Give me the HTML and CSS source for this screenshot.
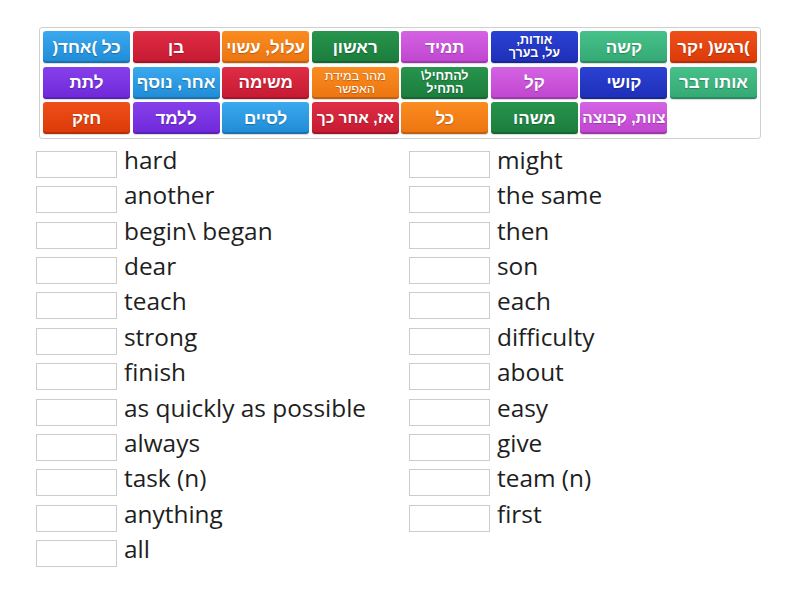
FILE: index.html
```html
<!DOCTYPE html>
<html lang="en">
<head>
<meta charset="utf-8">
<title>Match up</title>
<link rel="stylesheet" href="styles.css">
</head>
<body>
<div class="bank">
  <div class="tile c0" dir="rtl">כל )אחד(</div>
  <div class="tile c1" dir="rtl">בן</div>
  <div class="tile c2" dir="rtl">עלול, עשוי</div>
  <div class="tile c3" dir="rtl">ראשון</div>
  <div class="tile c4" dir="rtl">תמיד</div>
  <div class="tile c5 two" dir="rtl">אודות,<br>על, בערך</div>
  <div class="tile c6" dir="rtl">קשה</div>
  <div class="tile c7" dir="rtl">)רגש( יקר</div>

  <div class="tile c8" dir="rtl">לתת</div>
  <div class="tile c0" dir="rtl">אחר, נוסף</div>
  <div class="tile c1" dir="rtl">משימה</div>
  <div class="tile c2 two" dir="rtl">מהר במידת<br>האפשר</div>
  <div class="tile c3 two" dir="rtl">להתחיל\<br>התחיל</div>
  <div class="tile c4" dir="rtl">קל</div>
  <div class="tile c5" dir="rtl">קושי</div>
  <div class="tile c6" dir="rtl">אותו דבר</div>

  <div class="tile c7" dir="rtl">חזק</div>
  <div class="tile c8" dir="rtl">ללמד</div>
  <div class="tile c0" dir="rtl">לסיים</div>
  <div class="tile c1 long" dir="rtl">אז, אחר כך</div>
  <div class="tile c2" dir="rtl">כל</div>
  <div class="tile c3" dir="rtl">משהו</div>
  <div class="tile c4 long" dir="rtl">צוות, קבוצה</div>
</div>

<div class="answers">
  <div class="col">
    <div class="row"><span class="slot"></span><span class="word">hard</span></div>
    <div class="row"><span class="slot"></span><span class="word">another</span></div>
    <div class="row"><span class="slot"></span><span class="word">begin\ began</span></div>
    <div class="row"><span class="slot"></span><span class="word">dear</span></div>
    <div class="row"><span class="slot"></span><span class="word">teach</span></div>
    <div class="row"><span class="slot"></span><span class="word">strong</span></div>
    <div class="row"><span class="slot"></span><span class="word">finish</span></div>
    <div class="row"><span class="slot"></span><span class="word">as quickly as possible</span></div>
    <div class="row"><span class="slot"></span><span class="word">always</span></div>
    <div class="row"><span class="slot"></span><span class="word">task (n)</span></div>
    <div class="row"><span class="slot"></span><span class="word">anything</span></div>
    <div class="row"><span class="slot"></span><span class="word">all</span></div>
  </div>
  <div class="col">
    <div class="row"><span class="slot"></span><span class="word">might</span></div>
    <div class="row"><span class="slot"></span><span class="word">the same</span></div>
    <div class="row"><span class="slot"></span><span class="word">then</span></div>
    <div class="row"><span class="slot"></span><span class="word">son</span></div>
    <div class="row"><span class="slot"></span><span class="word">each</span></div>
    <div class="row"><span class="slot"></span><span class="word">difficulty</span></div>
    <div class="row"><span class="slot"></span><span class="word">about</span></div>
    <div class="row"><span class="slot"></span><span class="word">easy</span></div>
    <div class="row"><span class="slot"></span><span class="word">give</span></div>
    <div class="row"><span class="slot"></span><span class="word">team (n)</span></div>
    <div class="row"><span class="slot"></span><span class="word">first</span></div>
  </div>
</div>
</body>
</html>
```

FILE: styles.css
```css
html, body {
  margin: 0;
  padding: 0;
  background: #ffffff;
}

body {
  font-family: "Open Sans", "Liberation Sans", sans-serif;
  color: #1e1e1e;
}

.bank {
  box-sizing: border-box;
  width: 722px;
  margin: 27px 0 0 39px;
  padding: 3px 3px 4px 3px;
  border: 1px solid #cfcfcf;
  border-radius: 3px;
  display: grid;
  grid-template-columns: repeat(8, 1fr);
  column-gap: 2.6px;
  row-gap: 3.5px;
}

.tile {
  height: 32px;
  box-sizing: border-box;
  border-radius: 3px;
  display: flex;
  align-items: center;
  justify-content: center;
  text-align: center;
  color: #ffffff;
  font-family: "Liberation Sans", "DejaVu Sans", sans-serif;
  font-weight: bold;
  font-size: 17px;
  line-height: 1;
  white-space: nowrap;
  text-shadow: 0 1px 1px rgba(0, 0, 0, 0.25);
  box-shadow: inset 0 -2px 0 rgba(0, 0, 0, 0.18), 0 1px 1px rgba(0, 0, 0, 0.15);
  overflow: hidden;
}

.tile.two {
  font-size: 12.5px;
  font-weight: normal;
  line-height: 13px;
}

.tile.c5.two,
.tile.c3.two {
  font-weight: bold;
}

.tile.long {
  font-size: 15.5px;
}

.c0 { background: linear-gradient(#3aa9ee, #1f8bd6); }
.c1 { background: linear-gradient(#df2d44, #c51a32); }
.c2 { background: linear-gradient(#fa8c20, #ec7410); }
.c3 { background: linear-gradient(#27944d, #1b7c3c); }
.c4 { background: linear-gradient(#d463e3, #bf45cf); }
.c5 { background: linear-gradient(#2b42d3, #1e2fb8); }
.c6 { background: linear-gradient(#46c189, #34a873); }
.c7 { background: linear-gradient(#ef4f18, #db3a08); }
.c8 { background: linear-gradient(#8640ea, #6f28d9); }

.answers {
  display: grid;
  grid-template-columns: 373px 373px;
  padding-left: 36px;
  margin-top: 6px;
}

.row {
  display: flex;
  align-items: flex-end;
  height: 33px;
  margin-bottom: 2.36px;
}

.slot {
  box-sizing: border-box;
  width: 81px;
  height: 27px;
  border: 1px solid #cccccc;
  background: #ffffff;
  flex: none;
  margin-right: 7px;
}

.word {
  font-size: 24.4px;
  line-height: 33px;
  margin-bottom: 2px;
  white-space: nowrap;
}
```
